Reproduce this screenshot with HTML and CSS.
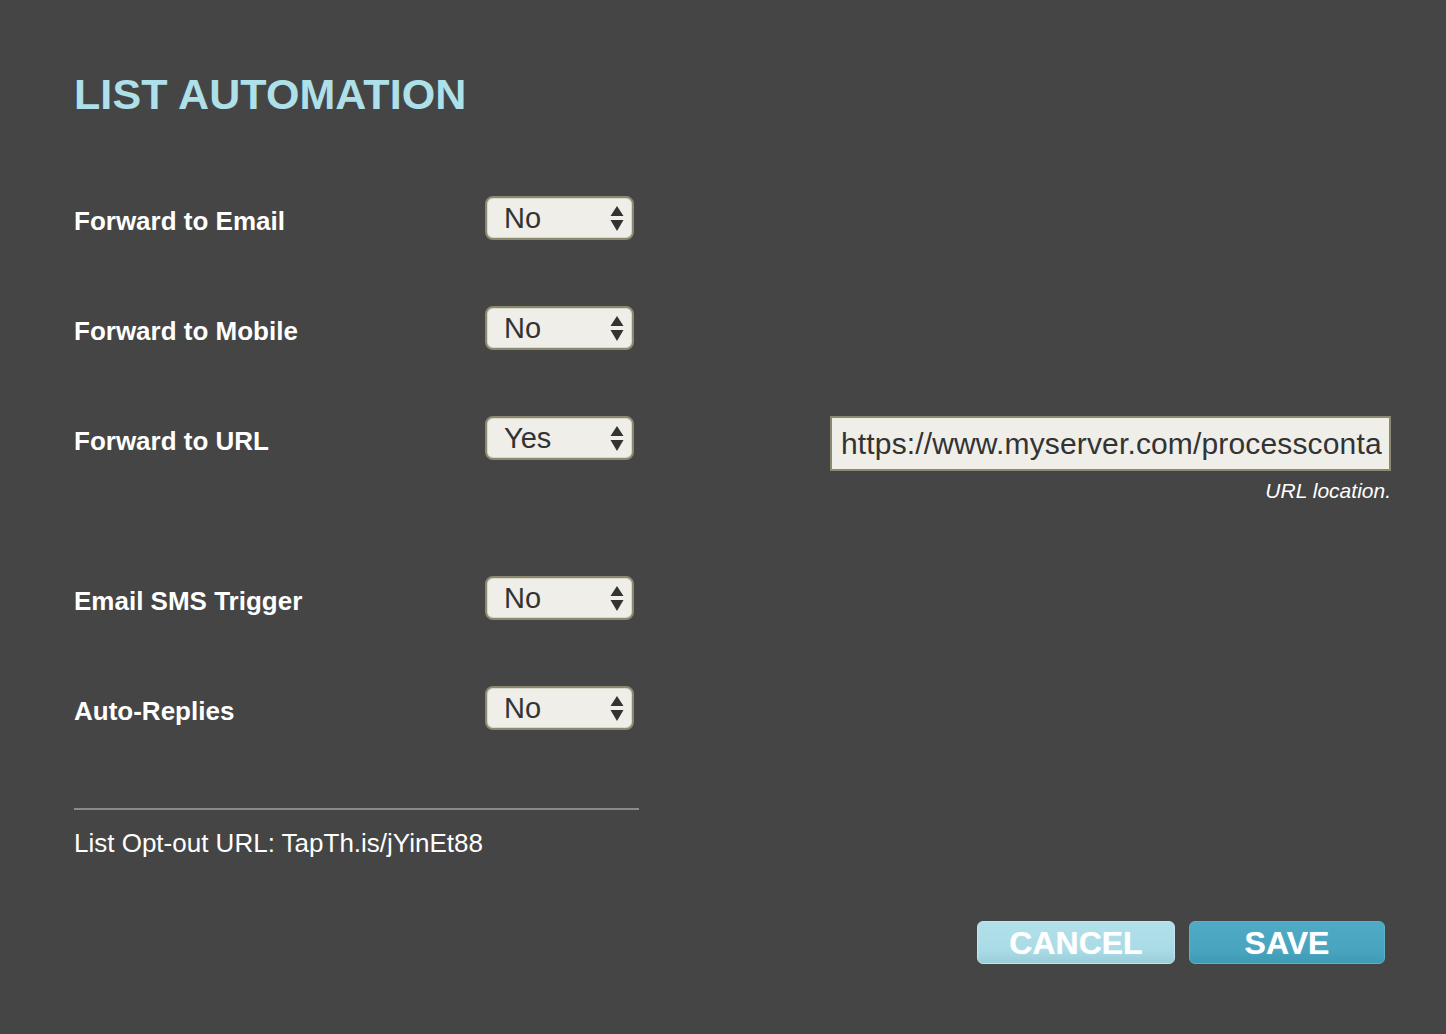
FILE: index.html
```html
<!DOCTYPE html>
<html lang="en">
<head>
<meta charset="utf-8">
<title>List Automation</title>
<link rel="stylesheet" href="styles.css">
</head>
<body>
<div class="page">
  <h1 class="title">LIST AUTOMATION</h1>

  <div class="rows">
    <div class="row">
      <div class="label">Forward to Email</div>
      <div class="select"><span class="val">No</span><svg class="arrows" width="14" height="25" viewBox="0 0 14 25"><path d="M7 0 L13.5 10 L0.5 10 Z M7 25 L13.5 14 L0.5 14 Z" fill="#333"/></svg></div>
    </div>
    <div class="row">
      <div class="label">Forward to Mobile</div>
      <div class="select"><span class="val">No</span><svg class="arrows" width="14" height="25" viewBox="0 0 14 25"><path d="M7 0 L13.5 10 L0.5 10 Z M7 25 L13.5 14 L0.5 14 Z" fill="#333"/></svg></div>
    </div>
    <div class="row row-url">
      <div class="label">Forward to URL</div>
      <div class="select"><span class="val">Yes</span><svg class="arrows" width="14" height="25" viewBox="0 0 14 25"><path d="M7 0 L13.5 10 L0.5 10 Z M7 25 L13.5 14 L0.5 14 Z" fill="#333"/></svg></div>
      <div class="url-field">
        <div class="url-input"><span>https://www.myserver.com/processconta</span></div>
        <div class="url-help">URL location.</div>
      </div>
    </div>
    <div class="row">
      <div class="label">Email SMS Trigger</div>
      <div class="select"><span class="val">No</span><svg class="arrows" width="14" height="25" viewBox="0 0 14 25"><path d="M7 0 L13.5 10 L0.5 10 Z M7 25 L13.5 14 L0.5 14 Z" fill="#333"/></svg></div>
    </div>
    <div class="row">
      <div class="label">Auto-Replies</div>
      <div class="select"><span class="val">No</span><svg class="arrows" width="14" height="25" viewBox="0 0 14 25"><path d="M7 0 L13.5 10 L0.5 10 Z M7 25 L13.5 14 L0.5 14 Z" fill="#333"/></svg></div>
    </div>
  </div>

  <div class="divider"></div>
  <p class="optout">List Opt-out URL: TapTh.is/jYinEt88</p>

  <div class="actions">
    <button class="btn btn-cancel">CANCEL</button>
    <button class="btn btn-save">SAVE</button>
  </div>
</div>
</body>
</html>
```

FILE: styles.css
```css
html, body {
  margin: 0;
  padding: 0;
  background: #454545;
  height: 100%;
}
body {
  font-family: "Liberation Sans", Arial, sans-serif;
  color: #ffffff;
}
.page {
  padding: 66px 55px 0 74px;
}
.title {
  margin: 0;
  font-size: 43px;
  font-weight: bold;
  color: #aee0ea;
  line-height: 56px;
  letter-spacing: 0.1px;
}
.rows {
  margin-top: 74px;
  display: flex;
  flex-direction: column;
  gap: 66px;
}
.row {
  display: flex;
  align-items: flex-start;
  height: 44px;
}
.row-url {
  height: 94px;
}
.label {
  width: 411px;
  font-size: 26px;
  font-weight: bold;
  line-height: 30px;
  padding-top: 10px;
}
.select {
  box-sizing: border-box;
  width: 149px;
  height: 44px;
  border: 2px solid #8d8970;
  border-radius: 8px;
  background: #efeee9;
  box-shadow: inset 0 0 0 1px #d9d7c9;
  display: flex;
  align-items: center;
  justify-content: space-between;
  padding: 0 8px 0 17px;
  color: #333;
}
.select .val {
  font-size: 29px;
  line-height: 32px;
  padding-bottom: 1px;
}
.arrows {
  display: block;
}
.url-field {
  margin-left: 196px;
  width: 561px;
}
.url-input {
  box-sizing: border-box;
  width: 561px;
  height: 55px;
  border: 2px solid #8d8970;
  background: #efeee9;
  padding: 0 8px 0 9px;
  overflow: hidden;
  white-space: nowrap;
  display: flex;
  align-items: center;
  color: #333;
  font-size: 30px;
  letter-spacing: 0.15px;
}
.url-help {
  text-align: right;
  font-style: italic;
  font-size: 21px;
  line-height: 24px;
  margin-top: 8px;
}
.divider {
  margin-top: 78px;
  width: 565px;
  height: 2px;
  background: #8a8a8a;
}
.optout {
  margin: 18px 0 0;
  font-size: 26px;
  line-height: 30px;
}
.actions {
  display: flex;
  justify-content: flex-end;
  gap: 14px;
  margin-top: 63px;
}
.btn {
  box-sizing: border-box;
  height: 43px;
  border-radius: 6px;
  font-family: "Liberation Sans", Arial, sans-serif;
  font-weight: bold;
  font-size: 32px;
  color: #ffffff;
  line-height: 38px;
  padding: 0;
  text-shadow: 0 0 1px rgba(255,255,255,0.6);
}
.btn-cancel {
  width: 198px;
  background: linear-gradient(#b2e0ea, #a9dbe6 70%, #9acdd9);
  border: 1px solid #c2e6ee;
}
.btn-save {
  width: 196px;
  margin-right: 6px;
  background: linear-gradient(#4eaac5, #48a4bf 70%, #3f9ab4);
  border: 1px solid #5cb2c9;
}
```
